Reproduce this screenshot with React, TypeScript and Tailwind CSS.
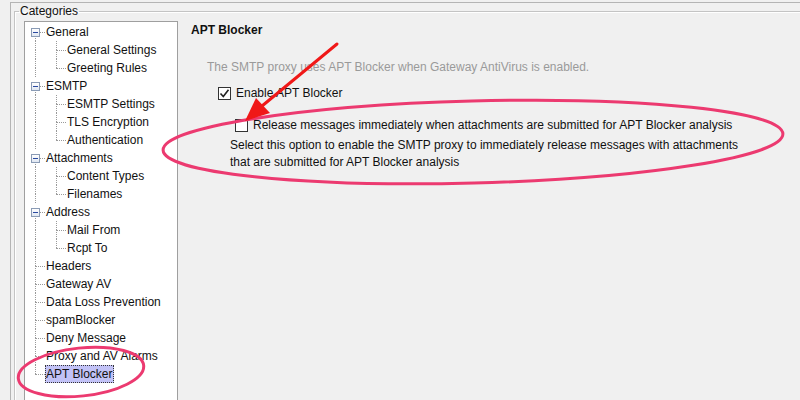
import React from 'react';

type Node = { label: string; children?: string[] };

const tree: Node[] = [
  { label: 'General', children: ['General Settings', 'Greeting Rules'] },
  { label: 'ESMTP', children: ['ESMTP Settings', 'TLS Encryption', 'Authentication'] },
  { label: 'Attachments', children: ['Content Types', 'Filenames'] },
  { label: 'Address', children: ['Mail From', 'Rcpt To'] },
  { label: 'Headers' },
  { label: 'Gateway AV' },
  { label: 'Data Loss Prevention' },
  { label: 'spamBlocker' },
  { label: 'Deny Message' },
  { label: 'Proxy and AV Alarms' },
  { label: 'APT Blocker' },
];

// one connector cell: vertical dotted line with optional horizontal branch
const Branch = ({ up, down, across, pad }: { up: boolean; down: boolean; across: boolean; pad: string }) => (
  <div className={`flex h-full shrink-0 ${pad}`}>
    <div className="flex w-[10px] flex-col">
      <div className={`h-[9px] ${up ? 'border-l border-dotted border-[#9a9a9a]' : ''}`} />
      <div
        className={`h-[9px] ${down ? 'border-l border-dotted border-[#9a9a9a]' : ''} ${
          across ? 'border-t border-dotted border-[#9a9a9a]' : ''
        }`}
      />
    </div>
  </div>
);

const Expander = () => (
  <div className="relative flex h-full w-[20px] shrink-0">
    <Branch up={false} down={true} across={true} pad="pl-[10px]" />
    <div className="absolute left-[6px] top-[5px] flex h-[9px] w-[9px] items-center justify-center border border-[#8a9bb5] bg-gradient-to-b from-white to-[#dfe6f2]">
      <div className="h-px w-[5px] bg-[#2a4aa0]" />
    </div>
  </div>
);

function TreeView() {
  const rows: React.ReactNode[] = [];
  tree.forEach((node, i) => {
    const last = i === tree.length - 1;
    const selected = node.label === 'APT Blocker';
    rows.push(
      <div key={node.label} className="flex h-[18px] items-center">
        {node.children ? (
          <Expander />
        ) : (
          <div className="flex h-full w-[20px] shrink-0">
            <Branch up={true} down={!last} across={true} pad="pl-[10px]" />
          </div>
        )}
        <span
          className={`leading-[16px] ${
            selected ? 'border border-dotted border-[#333] bg-[#c2c2f6] pr-px' : 'border border-transparent'
          }`}
        >
          {node.label}
        </span>
      </div>
    );
    node.children?.forEach((child, j) => {
      const lastChild = j === node.children!.length - 1;
      rows.push(
        <div key={child} className="flex h-[18px] items-center">
          <div className="flex h-full w-[20px] shrink-0">
            <Branch up={true} down={true} across={false} pad="pl-[10px]" />
          </div>
          <div className="flex h-full w-[21px] shrink-0">
            <Branch up={true} down={!lastChild} across={true} pad="pl-[11px]" />
          </div>
          <span className="border border-transparent leading-[16px]">{child}</span>
        </div>
      );
    });
  });
  return <div className="pt-[1px]">{rows}</div>;
}

const CheckBox = ({ checked }: { checked?: boolean }) => (
  <div className="flex h-[13px] w-[13px] shrink-0 items-center justify-center border border-[#333] bg-white">
    {checked && (
      <svg width="11" height="11" viewBox="0 0 11 11">
        <path d="M1.5 5.5 L4.3 8.5 L9.5 1.8" fill="none" stroke="#222" strokeWidth="1.6" />
      </svg>
    )}
  </div>
);

export default function App() {
  return (
    <div
      className="relative h-[400px] w-[800px] overflow-hidden bg-[#f0f0f0] text-[12px] text-[#111]"
      style={{ fontFamily: '"Liberation Sans", Arial, sans-serif' }}
    >
      <div className="h-full pl-[10px] pt-[2px]">
        <div className="h-full border-l border-t border-[#b4b4b4] pl-[3px] pt-[1px]">
          <fieldset className="h-[420px] border-l border-t border-[#c4c4c4] pl-0 pt-[3px] shadow-[inset_1px_1px_0_#ffffff]">
            <legend className="ml-[4px] px-[1px] leading-[14px] text-[#111]">Categories</legend>
            <div className="flex h-full pl-[9px]">
              <div className="h-full w-[154px] shrink-0 border border-[#9f9f9f] bg-white">
                <TreeView />
              </div>
              <div className="flex flex-col pl-[13px]">
                <div className="h-[18px] font-bold leading-[18px]">APT Blocker</div>
                <div className="mt-[19px] pl-[16px] leading-[18px] text-[#9a9a9a]">
                  The SMTP proxy uses APT Blocker when Gateway AntiVirus is enabled.
                </div>
                <div className="mt-[8px] flex h-[18px] items-center gap-[5px] pl-[27px]">
                  <CheckBox checked />
                  <span>Enable APT Blocker</span>
                </div>
                <div className="mt-[14px] flex h-[18px] items-center gap-[5px] pl-[44px]">
                  <CheckBox />
                  <span>Release messages immediately when attachments are submitted for APT Blocker analysis</span>
                </div>
                <div className="mt-[3px] w-[560px] pl-[39px] leading-[17px]">
                  Select this option to enable the SMTP proxy to immediately release messages with attachments
                  <br />
                  that are submitted for APT Blocker analysis
                </div>
              </div>
            </div>
          </fieldset>
        </div>
      </div>

      {/* annotation overlay */}
      <svg className="pointer-events-none absolute left-0 top-0" width="800" height="400" viewBox="0 0 800 400">
        <ellipse
          cx="473"
          cy="142"
          rx="310"
          ry="41"
          transform="rotate(-1.5 473 142)"
          fill="none"
          stroke="#ec3a70"
          strokeWidth="3"
        />
        <ellipse
          cx="81"
          cy="372"
          rx="63"
          ry="24"
          transform="rotate(-6 81 372)"
          fill="none"
          stroke="#ec3a70"
          strokeWidth="3"
        />
        <line x1="337" y1="44" x2="262" y2="106" stroke="#f01818" strokeWidth="3" strokeLinecap="round" />
        <polygon points="245,121 256,98 270,113" fill="#f01818" />
      </svg>
    </div>
  );
}
